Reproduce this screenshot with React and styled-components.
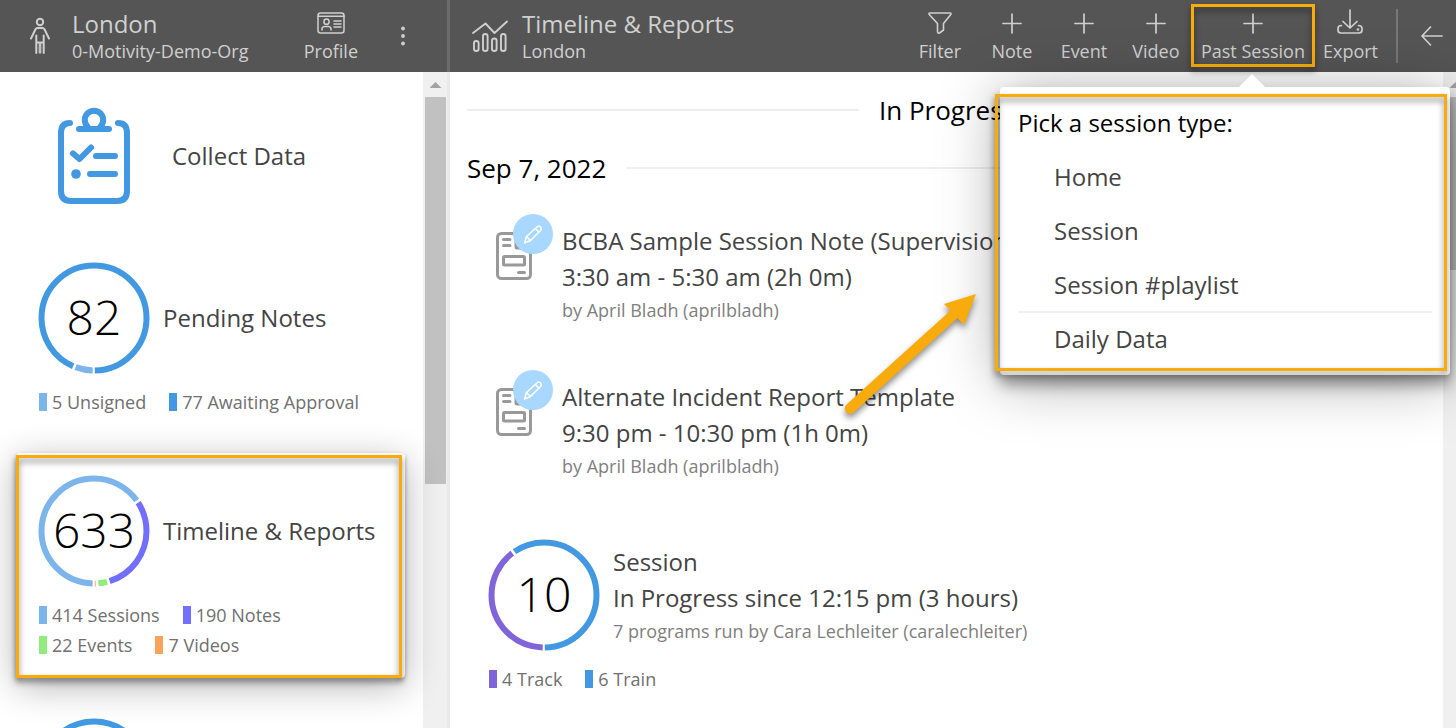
import styled, { createGlobalStyle } from "styled-components";

const GlobalStyle = createGlobalStyle`
  * {
    box-sizing: border-box;
  }
  body {
    margin: 0;
    background: #fff;
    color: #444;
    font-family: "Open Sans", "Noto Sans", sans-serif;
    font-size: 24px;
    line-height: 36px;
    overflow: hidden;
  }
  button {
    font: inherit;
    color: inherit;
    background: none;
    border: 0;
    padding: 0;
    cursor: pointer;
  }
  a {
    color: inherit;
    text-decoration: none;
  }
  h1, h2, p, ul {
    margin: 0;
    padding: 0;
    font-weight: 400;
  }
`;

const BLUE = "#4399e1";
const LIGHT_BLUE = "#7cb5ec";
const VIOLET = "#726fff";
const GREEN = "#90ed7d";
const ORANGE = "#f7a35c";
const PURPLE = "#8064d9";

const pending = [
  { count: 5, label: "Unsigned", color: LIGHT_BLUE },
  { count: 77, label: "Awaiting Approval", color: BLUE },
];

const timeline = [
  { count: 414, label: "Sessions", color: LIGHT_BLUE },
  { count: 190, label: "Notes", color: VIOLET },
  { count: 22, label: "Events", color: GREEN },
  { count: 7, label: "Videos", color: ORANGE },
];

const session = [
  { count: 4, label: "Track", color: PURPLE },
  { count: 6, label: "Train", color: BLUE },
];

const notes = [
  {
    title: "BCBA Sample Session Note (Supervision)",
    time: "3:30 am - 5:30 am (2h 0m)",
    author: "by April Bladh (aprilbladh)",
  },
  {
    title: "Alternate Incident Report Template",
    time: "9:30 pm - 10:30 pm (1h 0m)",
    author: "by April Bladh (aprilbladh)",
  },
];

const sessionTypes = ["Home", "Session", "Session #playlist"];

/* ---------- icons ---------- */

const Icon = styled.svg`
  display: block;
  flex: none;
  fill: none;
  stroke: currentColor;
  stroke-width: ${(p) => p.$stroke || 2};
  stroke-linecap: round;
  stroke-linejoin: round;
  overflow: visible;
`;

const PersonIcon = () => (
  <Icon width="20" height="38" viewBox="0 0 20 38">
    <circle cx="10" cy="5" r="3.2" />
    <path d="M1 21.500 L5.500 12.200 Q6.200 11 7.500 11 H12.500 Q13.800 11 14.500 12.200 L19 21.500" />
    <path d="M6.300 18.500 V36 M13.700 18.500 V36 M6.300 25.500 H13.700" />
    <path d="M9.300 26 V36 M10.700 26 V36" strokeWidth="1.200" />
  </Icon>
);

const ProfileIcon = () => (
  <Icon width="28" height="22" viewBox="0 0 28 22" $stroke={1.5}>
    <rect x="1" y="1" width="26" height="20" rx="2.500" />
    <path d="M1 4.200 H27" />
    <circle cx="9.500" cy="9.700" r="2.600" />
    <path d="M5 18 V16.500 Q5.500 14.500 8 14.500 H11 Q13.500 14.500 14 16.500 V18" />
    <path d="M17 9 H24 M17 12 H24 M17 15 H24" />
  </Icon>
);

const DotsIcon = () => (
  <Icon width="6" height="20" viewBox="0 0 6 20">
    <g fill="currentColor" stroke="none">
      <circle cx="3" cy="2.500" r="1.900" />
      <circle cx="3" cy="10" r="1.900" />
      <circle cx="3" cy="17.500" r="1.900" />
    </g>
  </Icon>
);

const ChartIcon = () => (
  <Icon width="36" height="32" viewBox="0 0 36 32" $stroke={1.9}>
    <path d="M1 13 L13.500 3.500 L22.500 13 L35 1.500" />
    <rect x="2" y="21" width="4.600" height="10" rx="2.300" />
    <rect x="11" y="14" width="4.600" height="17" rx="2.300" />
    <rect x="20" y="18.500" width="4.600" height="12.500" rx="2.300" />
    <rect x="29" y="14" width="4.600" height="17" rx="2.300" />
  </Icon>
);

const FilterIcon = () => (
  <Icon width="24" height="22" viewBox="0 0 24 22" $stroke={1.6}>
    <path d="M2 1 H22 Q23.500 1 22.800 2.500 L15.500 11.500 V18 L11.500 21 Q9.500 21.500 9.500 19.500 V11.500 L1.200 2.500 Q0.500 1 2 1 Z" />
  </Icon>
);

const PlusIcon = () => (
  <Icon width="20" height="22" viewBox="0 0 20 22" $stroke={1.7}>
    <path d="M1 11.500 H19 M10 2 V21" />
  </Icon>
);

const ExportIcon = () => (
  <Icon width="26" height="24" viewBox="0 0 26 24" $stroke={1.7}>
    <path d="M13 0 V18 M6 11.500 L13 18 L20 11.500" />
    <path d="M4.500 15.500 Q1 15.500 1 18.500 V20 Q1 23 4 23 H22 Q25 23 25 20 V18.500 Q25 15.500 21.500 15.500" />
    <circle cx="21" cy="19.500" r="0.500" />
  </Icon>
);

const BackIcon = () => (
  <Icon width="22" height="20" viewBox="0 0 22 20" $stroke={1.7}>
    <path d="M1 10 H21 M9.500 1 L1 10 L9.500 19" />
  </Icon>
);

const ClipboardIcon = () => (
  <Icon width="74" height="96" viewBox="0 0 74 96" $stroke={6}>
    <path d="M13 15 Q4 15 4 25 V83 Q4 93 14 93 H60 Q70 93 70 83 V25 Q70 15 61 15" />
    <path d="M22 21 H52" />
    <path d="M30.500 18.500 A9.200 9.200 0 1 1 43.500 18.500" />
    <path d="M16 45.500 L22.500 51 L34 39.500" />
    <path d="M39 48 H58 M33 66 H58" />
    <circle cx="19" cy="66" r="4.800" fill="currentColor" stroke="none" />
  </Icon>
);

const NoteIcon = () => (
  <Icon width="64" height="72" viewBox="0 0 64 72" $stroke={3}>
    <g stroke="#999">
      <rect x="8.500" y="21.500" width="33" height="45" rx="4" />
      <rect x="14.500" y="44.500" width="21" height="8.500" rx="1" />
      <rect x="27" y="28" width="9" height="8" rx="1" />
      <path d="M14.500 27.500 H21 M14.500 33.500 H21 M29.500 60.500 H35.500" />
    </g>
    <circle cx="44" cy="22" r="20" fill="#a8d7ff" stroke="none" />
    <g stroke="#fff" strokeWidth="1.500">
      <path d="M35.500 31 L37.500 24.500 L48.500 14.500 Q50 13.500 51.500 15 Q53 16.800 51.500 18.500 L41.500 28.500 Z" />
      <path d="M46.300 16.500 L50 20.200 M37.500 24.500 L41.500 28.500" />
    </g>
  </Icon>
);

/* ---------- ring chart ---------- */

const RingSvg = styled.svg`
  display: block;
  flex: none;
  width: 110px;
  height: 110px;
  overflow: visible;
  fill: none;
  stroke-width: 6;

  text {
    fill: #000;
    font-family: "Open Sans Light", "Noto Sans Light", "Open Sans", sans-serif;
    font-size: 48px;
    font-weight: 300;
    text-anchor: middle;
  }
`;

const Ring = ({ data }) => {
  const r = 52.5;
  const total = data.reduce((sum, d) => sum + d.count, 0);
  const length = 2 * Math.PI * r;
  const gap = 2.7;
  let start = 0;

  // segments run clockwise from the bottom of the circle
  return (
    <RingSvg viewBox="0 0 110 110">
      {data.map((d) => {
        const size = (d.count / total) * length;
        const offset = start + gap / 2;
        start += size;
        return (
          <circle
            key={d.label}
            cx="55"
            cy="55"
            r={r}
            stroke={d.color}
            strokeDasharray={`${size - gap} ${length}`}
            strokeDashoffset={-offset}
            transform="rotate(90 55 55)"
          />
        );
      })}
      <text x="55" y="72">{total}</text>
    </RingSvg>
  );
};

/* ---------- layout ---------- */

const Page = styled.div`
  display: flex;
  height: 100vh;
  overflow: hidden;
`;

const Sidebar = styled.aside`
  flex: 0 0 450px;
  display: flex;
  flex-direction: column;
`;

const Main = styled.main`
  position: relative;
  flex: 1;
  min-width: 0;
  display: flex;
  flex-direction: column;
`;

const Header = styled.header`
  flex: none;
  display: flex;
  align-items: center;
  height: 72px;
  padding-left: ${(p) => p.$indent};
  background: #555;
  color: #d0d0d0;
  border-right: ${(p) => (p.$divided ? "3px solid #6b6b6b" : "0")};
`;

const Heading = styled.div`
  flex: 1;
  min-width: 0;
  margin-left: ${(p) => p.$gap};
  padding-top: 2px;
  white-space: nowrap;
`;

const Title = styled.h1`
  font-size: 24px;
  line-height: 28px;
`;

const Subtitle = styled.p`
  font-size: 18px;
  line-height: 26px;
`;

const Tool = styled.button`
  position: relative;
  display: flex;
  flex-direction: column;
  align-items: center;
  justify-content: flex-end;
  gap: 4px;
  min-width: 72px;
  height: 72px;
  padding: 0 9px 8px;
  font-size: 18px;
  line-height: 26px;
  white-space: nowrap;
`;

const MoreButton = styled.button`
  display: flex;
  justify-content: center;
  align-items: center;
  width: 36px;
  height: 72px;
  margin: 0 26px 0 18px;
`;

const BackButton = styled.button`
  display: flex;
  align-items: center;
  height: 54px;
  margin-left: 9px;
  padding: 0 13px 0 23px;
  border-left: 2px solid #777;
`;

const Body = styled.div`
  flex: 1;
  min-height: 0;
  display: flex;
  overflow: hidden;
  border-right: ${(p) => (p.$divided ? "3px solid #e9e9e9" : "0")};
`;

const CardList = styled.nav`
  flex: 1;
  min-width: 0;
  display: flex;
  flex-direction: column;
  gap: 18px;
  padding: 13px 18px 0 16px;
`;

const Card = styled.a`
  position: relative;
  flex: none;
  display: block;
  padding: 23px 23px 18px;
  border-radius: 4px;
  box-shadow: ${(p) => (p.$active ? "0 2px 4px rgba(0, 0, 0, 0.25), 0 8px 36px rgba(0, 0, 0, 0.3)" : "none")};
`;

const CardRow = styled.div`
  display: flex;
  align-items: center;
  gap: 14px;
  white-space: nowrap;
`;

const IconBox = styled.div`
  display: flex;
  justify-content: center;
  width: 119px;
  padding-right: 9px;
  color: ${BLUE};
`;

const LegendList = styled.ul`
  display: flex;
  flex-wrap: wrap;
  column-gap: 23px;
  margin-top: ${(p) => p.$top || "14px"};
  list-style: none;
`;

const LegendItem = styled.li`
  display: flex;
  align-items: center;
  gap: 5px;
  color: #707070;
  font-size: 18px;
  line-height: 30px;

  &::before {
    content: "";
    width: 8px;
    height: 18px;
    background: ${(p) => p.$color};
  }
`;

const Legend = ({ data, top }) => (
  <LegendList $top={top}>
    {data.map((d) => (
      <LegendItem key={d.label} $color={d.color}>
        {d.count} {d.label}
      </LegendItem>
    ))}
  </LegendList>
);

const Track = styled.div`
  flex: none;
  width: 24px;
  margin-right: ${(p) => (p.$clipped ? "-11px" : "0")};
  padding: 10px 1px 0 2px;
  background: #f0f0f0;

  &::before {
    content: "";
    display: block;
    width: 12px;
    height: 6px;
    margin: 0 auto 9px;
    background: #a3a3a3;
    clip-path: polygon(50% 0, 100% 100%, 0 100%);
  }
`;

const Thumb = styled.div`
  height: ${(p) => p.$size};
  background: #c1c1c1;
`;

const Scrollbar = ({ size, clipped }) => (
  <Track $clipped={clipped} aria-hidden="true">
    <Thumb $size={size} />
  </Track>
);

const Feed = styled.div`
  flex: 1;
  min-width: 0;
  padding: 9px 16px 0 17px;
`;

const Divider = styled.h2`
  display: flex;
  align-items: center;
  gap: 20px;
  color: #000;
  font-size: 26px;
  line-height: 58px;
  white-space: nowrap;

  &::before,
  &::after {
    content: "";
    flex: 1;
    height: 2px;
    background: #eee;
  }
  &::before {
    display: ${(p) => (p.$left ? "none" : "block")};
  }
`;

const Entries = styled.div`
  display: flex;
  flex-direction: column;
  gap: 13px;
  padding-top: 3px;
`;

const Entry = styled.article`
  padding: 23px 0 18px 22px;
`;

const EntryRow = styled.div`
  display: flex;
  align-items: center;
  gap: ${(p) => p.$gap};
  min-height: ${(p) => p.$height};
  white-space: nowrap;
`;

const EntryLine = styled.p`
  line-height: 36px;
`;

const EntryMeta = styled.p`
  color: #808080;
  font-size: 18px;
  line-height: 30px;
`;

const NoteIconBox = styled.div`
  align-self: flex-start;
  height: 72px;
  margin-top: -11px;
`;

/* ---------- popover and callouts ---------- */

const Popover = styled.div`
  position: absolute;
  top: 87px;
  right: 6px;
  width: 450px;
  padding: 9px 18px;
  background: #fff;
  border-radius: 4px;
  box-shadow: 0 10px 14px rgba(0, 0, 0, 0.35), 0 6px 60px rgba(0, 0, 0, 0.35);

  &::before {
    content: "";
    position: absolute;
    top: -13px;
    right: 185px;
    width: 26px;
    height: 13px;
    background: #fff;
    clip-path: polygon(50% 0, 100% 100%, 0 100%);
  }
`;

const PopoverTitle = styled.h2`
  color: #000;
  font-size: 24px;
  line-height: 54px;
`;

const PopoverItem = styled.button`
  display: block;
  width: 100%;
  padding-left: 36px;
  text-align: left;
  line-height: 54px;
`;

const PopoverRule = styled.hr`
  height: 2px;
  margin: -1px 0;
  border: 0;
  background: #eee;
`;

const Highlight = styled.span`
  position: absolute;
  inset: ${(p) => p.$inset};
  border: 3px solid #f9ab0b;
  filter: drop-shadow(0 4px 3px rgba(0, 0, 0, 0.5));
  pointer-events: none;
`;

const Pointer = styled.svg`
  position: absolute;
  top: 290px;
  left: 390px;
  fill: #f9ab0b;
  filter: drop-shadow(0 4px 3px rgba(0, 0, 0, 0.45));
  overflow: visible;
  pointer-events: none;
`;

export default function App() {
  return (
    <>
      <GlobalStyle />
      <Page>
        <Sidebar>
          <Header $indent="30px" $divided>
            <PersonIcon />
            <Heading $gap="22px">
              <Title>London</Title>
              <Subtitle>0-Motivity-Demo-Org</Subtitle>
            </Heading>
            <Tool>
              <ProfileIcon />
              Profile
            </Tool>
            <MoreButton aria-label="More">
              <DotsIcon />
            </MoreButton>
          </Header>
          <Body $divided>
            <CardList>
              <Card href="#collect">
                <CardRow>
                  <IconBox>
                    <ClipboardIcon />
                  </IconBox>
                  Collect Data
                </CardRow>
              </Card>
              <Card href="#pending">
                <CardRow>
                  <Ring data={pending} />
                  Pending Notes
                </CardRow>
                <Legend data={pending} />
              </Card>
              <Card href="#timeline" $active>
                <CardRow>
                  <Ring data={timeline} />
                  Timeline &amp; Reports
                </CardRow>
                <Legend data={timeline} />
                <Highlight $inset="2px 3px 0 0" />
              </Card>
              <Card href="#programs" aria-label="Programs">
                <RingSvg viewBox="0 0 110 110">
                  <circle cx="55" cy="55" r="52.5" stroke={BLUE} />
                </RingSvg>
              </Card>
            </CardList>
            <Scrollbar size="387px" />
          </Body>
        </Sidebar>

        <Main>
          <Header $indent="22px">
            <ChartIcon />
            <Heading $gap="14px">
              <Title>Timeline &amp; Reports</Title>
              <Subtitle>London</Subtitle>
            </Heading>
            <Tool>
              <FilterIcon />
              Filter
            </Tool>
            <Tool>
              <PlusIcon />
              Note
            </Tool>
            <Tool>
              <PlusIcon />
              Event
            </Tool>
            <Tool>
              <PlusIcon />
              Video
            </Tool>
            <Tool>
              <PlusIcon />
              Past Session
              <Highlight $inset="4px -1px 5px" />
            </Tool>
            <Tool>
              <ExportIcon />
              Export
            </Tool>
            <BackButton aria-label="Back">
              <BackIcon />
            </BackButton>
          </Header>
          <Body>
            <Feed>
              <Divider>In Progress</Divider>
              <Divider $left>Sep 7, 2022</Divider>
              <Entries>
                {notes.map((note) => (
                  <Entry key={note.title}>
                    <EntryRow $gap="9px" $height="102px">
                      <NoteIconBox>
                        <NoteIcon />
                      </NoteIconBox>
                      <div>
                        <EntryLine>{note.title}</EntryLine>
                        <EntryLine>{note.time}</EntryLine>
                        <EntryMeta>{note.author}</EntryMeta>
                      </div>
                    </EntryRow>
                  </Entry>
                ))}
                <Entry>
                  <EntryRow $gap="14px" $height="120px">
                    <Ring data={session} />
                    <div>
                      <EntryLine>Session</EntryLine>
                      <EntryLine>In Progress since 12:15 pm (3 hours)</EntryLine>
                      <EntryMeta>7 programs run by Cara Lechleiter (caralechleiter)</EntryMeta>
                    </div>
                  </EntryRow>
                  <Legend data={session} top="9px" />
                </Entry>
              </Entries>
            </Feed>
            <Scrollbar size="173px" clipped />
          </Body>

          <Popover>
            <PopoverTitle>Pick a session type:</PopoverTitle>
            {sessionTypes.map((type) => (
              <PopoverItem key={type}>{type}</PopoverItem>
            ))}
            <PopoverRule />
            <PopoverItem>Daily Data</PopoverItem>
            <Highlight $inset="7px 3px 4px -5px" />
          </Popover>
          <Pointer width="140" height="130" viewBox="0 0 140 130" aria-hidden="true">
            <path d="M136 4 L104 14 L110.500 20.500 L6.500 114.500 A5 5 0 0 0 13.500 122.500 L117.500 28 L124 35 Z" />
          </Pointer>
        </Main>
      </Page>
    </>
  );
}
